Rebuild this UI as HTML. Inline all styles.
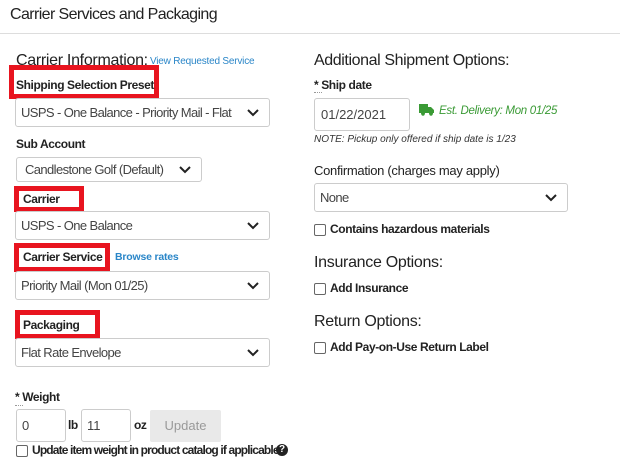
<!DOCTYPE html>
<html><head><meta charset="utf-8"><style>
body{margin:0;width:620px;height:470px;background:#fff;font-family:"Liberation Sans",Arial,sans-serif;color:#222;position:relative;overflow:hidden}
.a{position:absolute;white-space:nowrap}
.sel{position:absolute;border:1px solid #ccc;border-radius:3px;box-sizing:border-box;font-size:13px;letter-spacing:-0.6px;color:#444;padding-left:5px;display:flex;align-items:center;background:#fff}
.sel svg{position:absolute;right:10px;top:50%;margin-top:-4px}
.lab{font-size:12px;font-weight:bold;color:#222;letter-spacing:-0.4px}
.h{font-size:16px;letter-spacing:-0.3px}
.red{position:absolute;border:5px solid #e8141f;box-sizing:border-box;background:#fff}
.cb{position:absolute;width:10px;height:10px;border:1px solid #666;border-radius:2px}
.inp{position:absolute;border:1px solid #ccc;border-radius:3px;box-sizing:border-box;font-size:13px;color:#444;padding-left:5px;display:flex;align-items:center}
</style></head><body>
<div class="a" style="left:10px;top:6px;font-size:16px;letter-spacing:-0.6px;color:#222">Carrier Services and Packaging</div>
<div class="a" style="left:0;top:33px;width:620px;height:1px;background:#ddd"></div>

<div class="a h" style="left:16px;top:52px">Carrier Information:</div>
<div class="a" style="left:150px;top:56px;font-size:10px;letter-spacing:-0.2px;color:#2a86c8">View Requested Service</div>
<div class="red" style="left:9px;top:65px;width:150px;height:34px"></div>
<div class="a lab" style="left:16px;top:78px">Shipping Selection Preset</div>
<div class="sel" style="left:15px;top:98px;width:255px;height:29px">USPS - One Balance - Priority Mail - Flat<svg width="12" height="8"><path d="M1 1l5 5 5-5" stroke="#222" stroke-width="2" fill="none"/></svg></div>

<div class="a lab" style="left:16px;top:137px">Sub Account</div>
<div class="sel" style="left:16px;top:157px;width:186px;height:25px;padding-left:8px">Candlestone Golf (Default)<svg width="12" height="8"><path d="M1 1l5 5 5-5" stroke="#222" stroke-width="2" fill="none"/></svg></div>

<div class="red" style="left:14px;top:186px;width:70px;height:26px"></div>
<div class="a lab" style="left:23px;top:192px">Carrier</div>
<div class="sel" style="left:15px;top:211px;width:255px;height:29px">USPS - One Balance<svg width="12" height="8"><path d="M1 1l5 5 5-5" stroke="#222" stroke-width="2" fill="none"/></svg></div>

<div class="red" style="left:14px;top:243px;width:96px;height:29px"></div>
<div class="a lab" style="left:23px;top:250px">Carrier Service</div>
<div class="a" style="left:115px;top:251px;font-size:10.5px;letter-spacing:-0.2px;font-weight:bold;color:#2a86c8">Browse rates</div>
<div class="sel" style="left:15px;top:271px;width:255px;height:29px">Priority Mail (Mon 01/25)<svg width="12" height="8"><path d="M1 1l5 5 5-5" stroke="#222" stroke-width="2" fill="none"/></svg></div>

<div class="red" style="left:15px;top:310px;width:85px;height:29px"></div>
<div class="a lab" style="left:23px;top:318px">Packaging</div>
<div class="sel" style="left:15px;top:338px;width:255px;height:29px">Flat Rate Envelope<svg width="12" height="8"><path d="M1 1l5 5 5-5" stroke="#222" stroke-width="2" fill="none"/></svg></div>

<div class="a lab" style="left:15px;top:390px">* Weight</div>
<div class="a" style="left:15px;top:405px;width:8px;border-top:1px dotted #999"></div>
<div class="inp" style="left:16px;top:409px;width:50px;height:33px">0</div>
<div class="a lab" style="left:68px;top:418px">lb</div>
<div class="inp" style="left:81px;top:409px;width:50px;height:33px">11</div>
<div class="a lab" style="left:134px;top:418px">oz</div>
<div class="a" style="left:150px;top:410px;width:71px;height:32px;background:#e9e9e9;border-radius:2px;color:#999;font-size:13px;text-align:center;line-height:32px">Update</div>
<div class="cb" style="left:16px;top:445px"></div>
<div class="a lab" style="left:32px;top:443px;font-size:12px;letter-spacing:-0.85px">Update item weight in product catalog if applicable</div>
<div class="a" style="left:276px;top:444px;width:12px;height:12px;border-radius:50%;background:#222;color:#fff;font-size:10px;font-weight:bold;text-align:center;line-height:12px">?</div>

<div class="a h" style="left:314px;top:52px;letter-spacing:-0.4px">Additional Shipment Options:</div>
<div class="a lab" style="left:314px;top:78px">* Ship date</div>
<div class="a" style="left:314px;top:92px;width:8px;border-top:1px dotted #999"></div>
<div class="inp" style="left:314px;top:98px;width:96px;height:33px;padding-left:6px">01/22/2021</div>
<svg class="a" style="left:419px;top:104px" width="15" height="12" viewBox="0 0 15 12"><path d="M0 0h9v3h3l3 3v3h-1a2 2 0 0 1-4 0H6a2 2 0 0 1-4 0H0z" fill="#3a9a35"/><circle cx="4" cy="10" r="1.7" fill="#3a9a35"/><circle cx="12" cy="10" r="1.7" fill="#3a9a35"/></svg>
<div class="a" style="left:439px;top:105px;font-size:11.5px;letter-spacing:-0.3px;font-style:italic;color:#3a9a35">Est. Delivery: Mon 01/25</div>
<div class="a" style="left:314px;top:134px;font-size:10px;font-style:italic;color:#333">NOTE: Pickup only offered if ship date is 1/23</div>
<div class="a" style="left:314px;top:163px;font-size:13px;letter-spacing:-0.3px;color:#222">Confirmation (charges may apply)</div>
<div class="sel" style="left:314px;top:183px;width:254px;height:29px">None<svg width="12" height="8"><path d="M1 1l5 5 5-5" stroke="#222" stroke-width="2" fill="none"/></svg></div>
<div class="cb" style="left:314px;top:224px"></div>
<div class="a lab" style="left:330px;top:222px">Contains hazardous materials</div>
<div class="a h" style="left:314px;top:254px">Insurance Options:</div>
<div class="cb" style="left:314px;top:283px"></div>
<div class="a lab" style="left:330px;top:281px">Add Insurance</div>
<div class="a h" style="left:314px;top:313px">Return Options:</div>
<div class="cb" style="left:314px;top:342px"></div>
<div class="a lab" style="left:330px;top:340px">Add Pay-on-Use Return Label</div>
</body></html>
